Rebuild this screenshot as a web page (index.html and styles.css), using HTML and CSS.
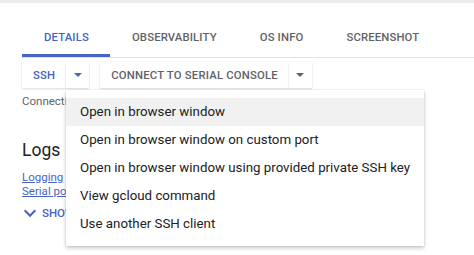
FILE: index.html
```html
<!DOCTYPE html>
<html lang="en">
<head>
  <meta charset="UTF-8" />
  <title>VM instance details</title>
  <link rel="stylesheet" href="styles.css">
</head>
<body>
  <div class="topbar"></div>

  <div class="page">
    <nav class="tabs">
      <span class="tab active">Details</span>
      <span class="tab">Observability</span>
      <span class="tab">OS info</span>
      <span class="tab">Screenshot</span>
    </nav>

    <div class="actions">
      <div class="split">
        <button class="btn primary">SSH</button>
        <button class="btn caret primary"><span class="arrow"></span></button>
      </div>
      <div class="split">
        <button class="btn">Connect to serial console</button>
        <button class="btn caret"><span class="arrow"></span></button>
      </div>

      <!-- menu abierto del botón SSH -->
      <ul class="menu">
        <li class="hover">Open in browser window</li>
        <li>Open in browser window on custom port</li>
        <li>Open in browser window using provided private SSH key</li>
        <li>View gcloud command</li>
        <li>Use another SSH client</li>
      </ul>
    </div>

    <div class="status">Connecting...</div>

    <h2>Logs</h2>
    <div class="links">
      <a href="#">Logging</a>
      <a href="#">Serial port 1 (console)</a>
    </div>

    <div class="show-more">
      <svg viewBox="0 0 24 24" width="16" height="16"><path d="M4 8l8 8 8-8" fill="none" stroke="currentColor" stroke-width="3.2"/></svg>
      <span>Show more</span>
    </div>
  </div>
</body>
</html>
```

FILE: styles.css
```css
:root {
  --blue: #4764c2;
  --grey: #5f6368;
  --line: #e3e3e3;
}

html, body {
  min-height: 255px;
}

body {
  margin: 0;
  font-family: Roboto, "Liberation Sans", sans-serif;
  color: #202124;
  background: #fff;
}

.topbar {
  height: 3px;
  background: #ececec;
}

.page {
  padding: 19px 0 0 22px;
}

.tabs {
  display: flex;
  border-bottom: 1px solid var(--line);
}

.tab {
  padding: 9px 21px 9px 22px;
  font-size: 11.3px;
  line-height: 14px;
  font-weight: 500;
  letter-spacing: 0.15px;
  text-transform: uppercase;
  color: var(--grey);
  border-bottom: 3px solid transparent;
}

.tab.active {
  color: var(--blue);
  border-bottom-color: var(--blue);
}

.actions {
  position: relative;
  display: flex;
  gap: 11px;
  margin-top: 4px;
}

.split {
  display: flex;
}

.btn {
  height: 26px;
  padding: 0 11px;
  border: none;
  background: #fff;
  font-family: inherit;
  font-size: 11.3px;
  font-weight: 500;
  letter-spacing: 0.2px;
  text-transform: uppercase;
  color: var(--grey);
  box-shadow: 0 1px 2px rgba(0, 0, 0, 0.14), 0 0 1px rgba(0, 0, 0, 0.08);
}

.btn.primary {
  color: var(--blue);
}

.btn.caret {
  width: 23px;
  padding: 0;
  display: flex;
  align-items: center;
  justify-content: center;
}

.arrow {
  width: 0;
  height: 0;
  border-left: 4px solid transparent;
  border-right: 4px solid transparent;
  border-top: 4px solid currentColor;
}

.menu {
  position: absolute;
  left: 44px;
  top: 28px;
  width: 358px;
  margin: 0;
  padding: 8px 0;
  list-style: none;
  background: #fff;
  box-shadow: 0 2px 4px rgba(0, 0, 0, 0.22), 0 0 2px rgba(0, 0, 0, 0.1);
  z-index: 2;
}

.menu li {
  height: 28px;
  line-height: 28px;
  padding: 0 14px;
  font-size: 13.3px;
  color: #202124;
  white-space: nowrap;
}

.menu li.hover {
  background: #f1f1f1;
}

.status {
  margin-top: 6px;
  font-size: 11.5px;
  line-height: 14px;
  color: var(--grey);
}

h2 {
  margin: 31px 0 9px;
  font-size: 17.5px;
  font-weight: 400;
  line-height: 22px;
}

.links a {
  display: block;
  width: max-content;
  font-size: 11.5px;
  line-height: 14px;
  color: var(--blue);
}

.show-more {
  display: flex;
  align-items: center;
  gap: 4px;
  margin-top: 7px;
  color: var(--blue);
  font-size: 11.5px;
  font-weight: 500;
  text-transform: uppercase;
}
```
